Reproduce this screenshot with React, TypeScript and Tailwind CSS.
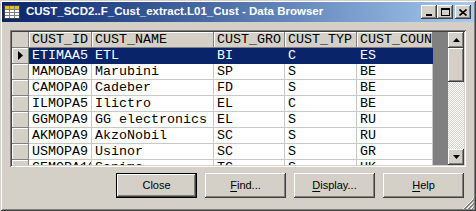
import React from "react";

const raised =
  "shadow-[inset_-1px_-1px_#404040,inset_1px_1px_#ffffff,inset_-2px_-2px_#808080,inset_2px_2px_#d4d0c8]";

const columns = [
  { title: "CUST_ID", width: "w-[63px]" },
  { title: "CUST_NAME", width: "w-[122px]" },
  { title: "CUST_GRO", width: "w-[71px]" },
  { title: "CUST_TYP", width: "w-[72px]" },
  { title: "CUST_COUN", width: "w-[76px]" },
];

const rows = [
  ["ETIMAA5", "ETL", "BI", "C", "ES"],
  ["MAMOBA9", "Marubini", "SP", "S", "BE"],
  ["CAMOPA0", "Cadeber", "FD", "S", "BE"],
  ["ILMOPA5", "Ilictro", "EL", "C", "BE"],
  ["GGMOPA9", "GG electronics", "EL", "S", "RU"],
  ["AKMOPA9", "AkzoNobil", "SC", "S", "RU"],
  ["USMOPA9", "Usinor", "SC", "S", "GR"],
  ["CEMOPA10", "Sanimo", "TC", "S", "UK"],
];

const TableIcon = () => (
  <svg width="16" height="16" viewBox="0 0 16 16">
    <rect x="0.5" y="1.5" width="15" height="13" fill="#fff" stroke="#404040" />
    <rect x="1" y="2" width="14" height="3" fill="#e8c000" />
    <path d="M1 5.5h14M1 8.5h14M1 11.5h14M5.5 2v12M10.5 2v12" stroke="#808080" />
  </svg>
);

const CaptionButton = ({ children }: { children: React.ReactNode }) => (
  <div className={`w-[16px] h-[14px] bg-[#d4d0c8] flex items-center justify-center ${raised}`}>
    {children}
  </div>
);

const ScrollArrow = ({ down }: { down?: boolean }) => (
  <div className={`w-[16px] h-[16px] bg-[#d4d0c8] flex items-center justify-center ${raised}`}>
    <svg width="7" height="4" viewBox="0 0 7 4">
      {down ? <path d="M0 0h7L3.5 4z" fill="#000" /> : <path d="M0 4h7L3.5 0z" fill="#000" />}
    </svg>
  </div>
);

const Button = ({ label, hotkey, isDefault }: { label: string; hotkey?: number; isDefault?: boolean }) => (
  <div
    className={`w-[81px] h-[25px] bg-[#d4d0c8] flex items-center justify-center text-[11px] text-black ${
      isDefault
        ? "shadow-[inset_0_0_0_1px_#000000,inset_-2px_-2px_#404040,inset_2px_2px_#ffffff,inset_-3px_-3px_#808080]"
        : raised
    }`}
  >
    {hotkey === undefined ? (
      label
    ) : (
      <span>
        {label.slice(0, hotkey)}
        <span className="underline underline-offset-2">{label[hotkey]}</span>
        {label.slice(hotkey + 1)}
      </span>
    )}
  </div>
);

export default function App() {
  return (
    <div
      className="w-[476px] h-[211px] bg-[#d4d0c8] p-[2px] flex flex-col shadow-[inset_1px_1px_#d4d0c8,inset_-1px_-1px_#404040,inset_2px_2px_#ffffff,inset_-2px_-2px_#808080] overflow-hidden"
      style={{ fontFamily: '"Liberation Sans", Arial, sans-serif' }}
    >
      {/* title bar */}
      <div className="h-[20px] flex items-center pl-[2px] pr-[3px] bg-gradient-to-r from-[#0a246a] to-[#a6caf0]">
        <TableIcon />
        <span className="ml-[6px] text-[11.5px] font-bold text-white whitespace-nowrap">
          CUST_SCD2..F_Cust_extract.L01_Cust - Data Browser
        </span>
        <div className="ml-auto flex items-center">
          <CaptionButton>
            <div className="w-[6px] h-[2px] bg-black mt-[6px] -ml-[1px]" />
          </CaptionButton>
          <CaptionButton>
            <div className="w-[9px] h-[8px] border border-black border-t-2" />
          </CaptionButton>
          <div className="w-[2px]" />
          <CaptionButton>
            <svg width="8" height="7" viewBox="0 0 8 7">
              <path d="M0.5 0.5l7 6M7.5 0.5l-7 6" stroke="#000" strokeWidth="1.6" />
            </svg>
          </CaptionButton>
        </div>
      </div>

      {/* grid */}
      <div className="ml-[8px] mt-[8px] w-[456px] h-[137px] p-[2px] bg-[#808080] shadow-[inset_1px_1px_#808080,inset_-1px_-1px_#ffffff,inset_2px_2px_#404040,inset_-2px_-2px_#d4d0c8]">
        <div
          className="flex h-full overflow-hidden text-[13.33px] leading-none text-black"
          style={{ fontFamily: '"Liberation Mono", "Courier New", monospace' }}
        >
          <div className="w-[421px] flex flex-col">
            <div className="flex h-[16px] shrink-0">
              <div className="w-[17px] h-full bg-[#d4d0c8] border-r border-b border-[#808080]" />
              {columns.map((c) => (
                <div
                  key={c.title}
                  className={`${c.width} h-full bg-[#d4d0c8] border-r border-b border-[#808080] shadow-[inset_1px_1px_#ffffff] pl-[3px] flex items-center whitespace-nowrap overflow-hidden`}
                >
                  {c.title}
                </div>
              ))}
            </div>
            {rows.map((r, i) => (
              <div key={i} className="flex h-[16px] shrink-0">
                <div className="w-[17px] h-full bg-[#d4d0c8] border-r border-b border-[#808080] shadow-[inset_1px_1px_#ffffff] flex items-center justify-center">
                  {i === 0 && (
                    <svg width="5" height="9" viewBox="0 0 5 9">
                      <path d="M0 0l5 4.5L0 9z" fill="#000" />
                    </svg>
                  )}
                </div>
                {r.map((v, j) => (
                  <div
                    key={j}
                    className={`${columns[j].width} h-full border-r border-b pl-[3px] flex items-center whitespace-nowrap overflow-hidden ${
                      i === 0 ? "bg-[#0a246a] text-white border-[#0a246a]" : "bg-white border-[#c8c8c8]"
                    }`}
                  >
                    {v}
                  </div>
                ))}
              </div>
            ))}
          </div>
          <div className="w-[15px] bg-[#808080]" />
          {/* scrollbar */}
          <div className="w-[16px] flex flex-col bg-[repeating-conic-gradient(#d4d0c8_0_25%,#ffffff_0_50%)] bg-[length:2px_2px]">
            <ScrollArrow />
            <div className={`h-[34px] bg-[#d4d0c8] ${raised}`} />
            <div className="flex-1" />
            <ScrollArrow down />
          </div>
        </div>
      </div>

      {/* buttons */}
      <div className="mt-[6px] flex justify-end gap-[8px] pr-[10px]">
        <Button label="Close" isDefault />
        <Button label="Find..." hotkey={0} />
        <Button label="Display..." hotkey={0} />
        <Button label="Help" hotkey={0} />
      </div>

      {/* size grip */}
      <div className="mt-auto flex justify-end">
        <svg width="12" height="11" viewBox="0 0 12 11">
          <path d="M11 1L1 11M11 5L5 11M11 9L9 11" stroke="#ffffff" />
          <path d="M12 1L2 11M12 5L6 11M12 9L10 11" stroke="#808080" />
          <path d="M12 2L3 11M12 6L7 11" stroke="#808080" />
        </svg>
      </div>
    </div>
  );
}
